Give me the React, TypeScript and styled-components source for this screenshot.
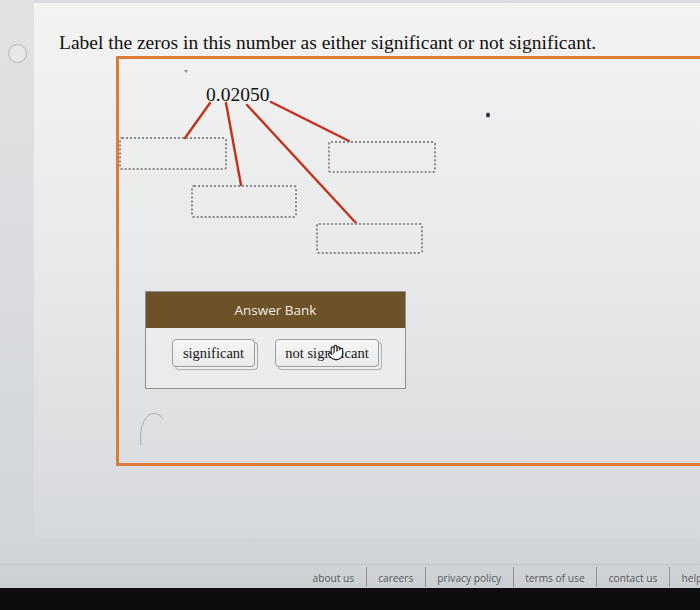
import styled, { createGlobalStyle } from 'styled-components';
import { Hand } from 'lucide-react';

const GlobalStyle = createGlobalStyle`
    html, body {
        margin: 0;
        padding: 0;
        overflow: hidden;
        background: #cfd2d5;
    }
`

const Screen = styled.div`
    width: 700px;
    height: 610px;
    display: flex;
    flex-direction: column;
    overflow: hidden;
`
const Top = styled.div`
    height: 538px;
    display: grid;
    grid-template-columns: 34px 1fr;
`
const Gutter = styled.div`
    background: linear-gradient(180deg, #e0e2e4 0%, #d3d6d9 100%);
    padding: 44px 0 0 8px;
`
const Radio = styled.div`
    width: 17px;
    height: 17px;
    border-radius: 50%;
    border: 1px solid #b4b8bc;
    background: #e6e8ea;
`
const Panel = styled.div`
    border-top: 3px solid #dadbdc;
    padding: 28px 0 0 25px;
    background: linear-gradient(180deg, #f3f3f2 0%, #e9eaeb 45%, #d6d9dc 100%);
    overflow: hidden;
`
const Title = styled.h1`
    margin: 0;
    font-family: 'Liberation Serif', 'Times New Roman', serif;
    font-weight: normal;
    font-size: 19.5px;
    line-height: 24px;
    color: #111111;
    white-space: nowrap;
`
const OrangeBox = styled.div`
    box-sizing: border-box;
    margin: 1px 0 0 57px;
    width: 640px;
    height: 410px;
    border: 3px solid #dc7b35;
    border-right: none;
`
const Canvas = styled.div`
    position: relative;
    height: 232px;
`
const Lines = styled.svg`
    position: absolute;
    left: 0;
    top: 0;
    width: 100%;
    height: 100%;
    overflow: visible;
`
const NumberLabel = styled.div`
    position: absolute;
    left: 87px;
    top: 26px;
    font-family: 'Liberation Serif', 'Times New Roman', serif;
    font-size: 19.5px;
    line-height: 20px;
    color: #111111;
`
const DropBox = styled.div<{ $x: number; $y: number; $w: number; $h: number }>`
    position: absolute;
    left: ${p => p.$x}px;
    top: ${p => p.$y}px;
    width: ${p => p.$w}px;
    height: ${p => p.$h}px;
    box-sizing: border-box;
    border: 2px dotted #8a8a8a;
    border-radius: 3px;
`
const AnswerBank = styled.div`
    margin-left: 26px;
    width: 261px;
    border: 1px solid #8e9093;
    box-sizing: border-box;
`
const BankHeader = styled.div`
    height: 36px;
    background: #6d5128;
    color: #f1ece2;
    font-family: 'Open Sans', sans-serif;
    font-size: 13.5px;
    display: flex;
    align-items: center;
    justify-content: center;
`
const BankBody = styled.div`
    height: 60px;
    display: flex;
    gap: 20px;
    padding: 11px 0 0 26px;
    box-sizing: border-box;
    background: rgba(240, 241, 242, 0.6);
`
const Chip = styled.div<{ $w: number }>`
    position: relative;
    width: ${p => p.$w}px;
    height: 28px;
    box-sizing: border-box;
    border: 1px solid #9b9da0;
    border-radius: 4px;
    background: linear-gradient(180deg, #f7f7f7 0%, #e9eaeb 100%);
    box-shadow: 3px 3px 0 -1px #eceded, 3px 3px 0 0 #aeb0b3;
    font-family: 'Liberation Serif', 'Times New Roman', serif;
    font-size: 14.5px;
    color: #161616;
    display: flex;
    align-items: center;
    justify-content: center;
`
const Cursor = styled.span`
    position: absolute;
    left: 51px;
    top: 4px;
    display: flex;
`
const FooterArea = styled.div`
    height: 50px;
    padding-top: 26px;
    box-sizing: border-box;
    background: linear-gradient(180deg, #d3d6d9 0%, #cdd0d3 100%);
`
const FooterRow = styled.nav`
    border-top: 1px solid #c1c4c7;
    height: 24px;
    padding: 2px 0 0 301px;
    box-sizing: border-box;
    display: flex;
    white-space: nowrap;
`
const FooterLink = styled.span<{ $first?: boolean }>`
    padding: 0 11.5px;
    height: 20px;
    line-height: 22px;
    border-left: ${p => (p.$first ? 'none' : '1px solid #8f9296')};
    font-family: 'Open Sans', sans-serif;
    font-size: 10.2px;
    color: #55585b;
`
const Band = styled.div`
    height: 22px;
    background: #0e0c0d;
`

const boxes = [
    { x: 0, y: 78, w: 108, h: 33 },
    { x: 72, y: 126, w: 106, h: 33 },
    { x: 209, y: 82, w: 108, h: 32 },
    { x: 197, y: 164, w: 107, h: 31 },
];

const links = ['about us', 'careers', 'privacy policy', 'terms of use', 'contact us', 'help'];

export default function App() {
    return (
        <Screen>
            <GlobalStyle />
            <Top>
                <Gutter>
                    <Radio />
                </Gutter>
                <Panel>
                    <Title>Label the zeros in this number as either significant or not significant.</Title>
                    <OrangeBox>
                        <Canvas>
                            <Lines>
                                <g stroke="#c2321b" strokeWidth="2.4" strokeLinecap="round">
                                    <line x1="91" y1="44" x2="66" y2="79" />
                                    <line x1="107" y1="44" x2="122" y2="126" />
                                    <line x1="128" y1="46" x2="237" y2="164" />
                                    <line x1="152" y1="43" x2="230" y2="82" />
                                </g>
                                <path d="M65 11 l2 3 l2 -3 z" fill="#8a8c8e" />
                                <ellipse cx="369" cy="56" rx="2" ry="2.6" fill="#333840" />
                            </Lines>
                            <NumberLabel>0.02050</NumberLabel>
                            {boxes.map((b, i) => (
                                <DropBox key={i} $x={b.x} $y={b.y} $w={b.w} $h={b.h} />
                            ))}
                        </Canvas>
                        <AnswerBank>
                            <BankHeader>Answer Bank</BankHeader>
                            <BankBody>
                                <Chip $w={83}>significant</Chip>
                                <Chip $w={104}>
                                    not significant
                                    <Cursor>
                                        <Hand size={17} fill="#ffffff" color="#222222" strokeWidth={1.6} />
                                    </Cursor>
                                </Chip>
                            </BankBody>
                        </AnswerBank>
                        <svg width="30" height="40" style={{ display: 'block', margin: '20px 0 0 18px' }}>
                            <path d="M4 36 C2 22 6 8 14 5 C20 3 24 7 26 10" fill="none" stroke="#a6abb0" strokeWidth="1" />
                        </svg>
                    </OrangeBox>
                </Panel>
            </Top>
            <FooterArea>
                <FooterRow>
                    {links.map((l, i) => (
                        <FooterLink key={l} $first={i === 0}>{l}</FooterLink>
                    ))}
                </FooterRow>
            </FooterArea>
            <Band />
        </Screen>
    );
}
